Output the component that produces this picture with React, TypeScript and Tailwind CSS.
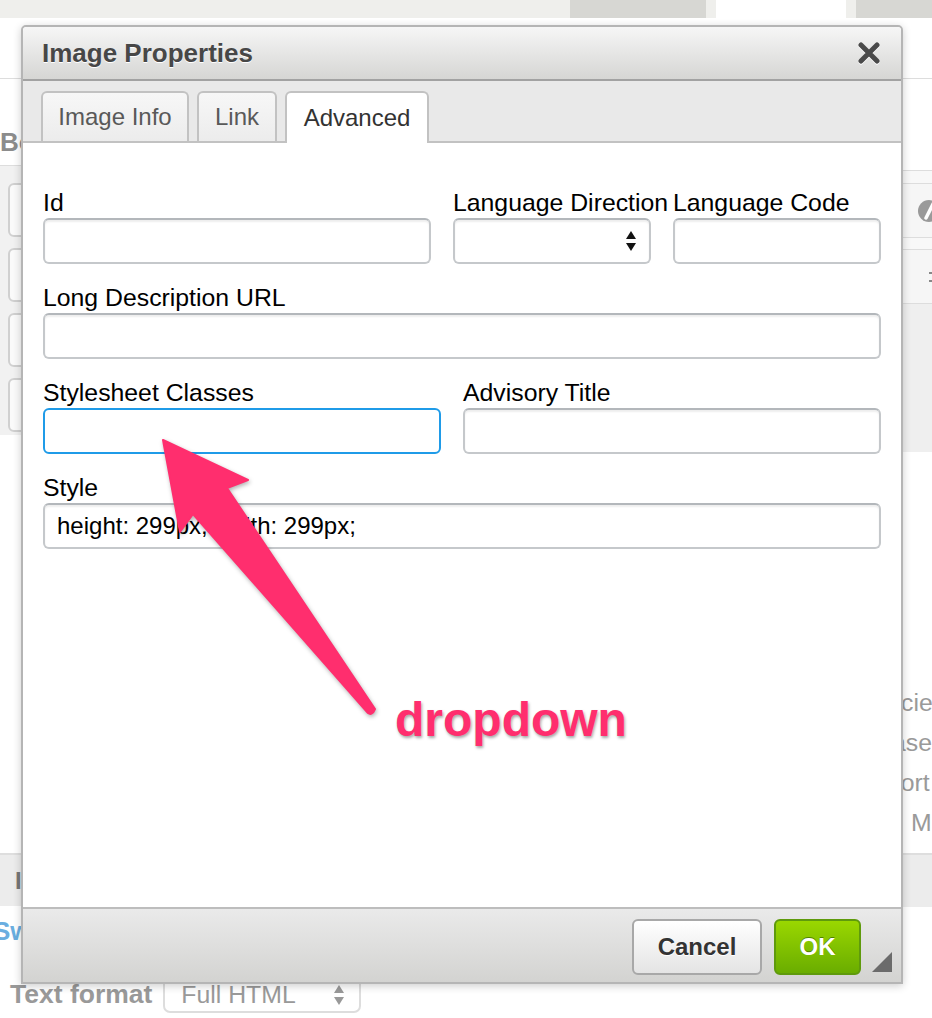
import type { ReactNode } from 'react';

const inputClass =
  'h-[46px] w-full rounded-[6px] border-2 border-[#c5c8cb] border-t-[#b3b7bb] bg-white shadow-[inset_0_2px_2px_rgba(0,0,0,0.07)]';

function Field({ label, children }: { label: string; children: ReactNode }) {
  return (
    <div className="flex flex-col">
      <label className="mb-[1px] whitespace-nowrap text-[24.8px] leading-[28px] text-black">
        {label}
      </label>
      {children}
    </div>
  );
}

function Tab({ label, active, width }: { label: string; active?: boolean; width: string }) {
  return (
    <div
      className={
        active
          ? `relative -mb-[2px] flex h-[52px] items-center justify-center rounded-t-[6px] border-2 border-b-0 border-[#c2c2c2] bg-white text-[24px] text-[#333] ${width}`
          : `flex h-[50px] items-center justify-center rounded-t-[6px] border-2 border-b-0 border-[#c2c2c2] bg-gradient-to-b from-[#f7f7f7] to-[#ececec] text-[24px] text-[#595959] ${width}`
      }
    >
      {label}
    </div>
  );
}

function SelectArrows() {
  return (
    <svg width="12" height="22" viewBox="0 0 12 22" aria-hidden="true">
      <path d="M6 1 L11 9 L1 9 Z" fill="#111" />
      <path d="M1 13 L11 13 L6 21 Z" fill="#111" />
    </svg>
  );
}

function Background() {
  return (
    <div className="flex h-full flex-col">
      <div className="flex h-[18px] bg-[#efefec]">
        <div className="w-[570px]" />
        <div className="w-[136px] bg-[#d7d7d3]" />
        <div className="w-[10px]" />
        <div className="w-[130px] bg-white" />
        <div className="w-[10px]" />
        <div className="flex-1 bg-[#d7d7d3]" />
      </div>

      <div className="flex h-[957px]">
        {/* left edge of the page behind the dialog */}
        <div className="flex w-[22px] flex-col overflow-hidden">
          <div className="h-[61px] shrink-0 border-b border-[#dddddd]" />
          <div className="h-[86px] shrink-0 whitespace-nowrap pt-[49px] text-[26px] font-bold leading-[28px] text-[#8c8c8c]">
            Bo
          </div>
          <div className="flex h-[270px] shrink-0 flex-col gap-[11px] border-t border-[#dddddd] bg-[#f1f1f1] pl-[8px] pt-[17px]">
            <div className="h-[54px] w-[40px] rounded-[6px] border-2 border-[#d0d0d0] bg-[#fafafa]" />
            <div className="h-[54px] w-[40px] rounded-[6px] border-2 border-[#d0d0d0] bg-[#fafafa]" />
            <div className="h-[54px] w-[40px] rounded-[6px] border-2 border-[#d0d0d0] bg-[#fafafa]" />
            <div className="h-[54px] w-[40px] rounded-[6px] border-2 border-[#d0d0d0] bg-[#fafafa]" />
          </div>
          <div className="h-[418px] shrink-0" />
          <div className="flex h-[53px] shrink-0 items-center border-t-2 border-[#dedede] bg-[#ececec] pl-[15px] text-[24px] font-bold text-[#777]">
            I
          </div>
          <div className="-ml-[7px] whitespace-nowrap pt-[11px] text-[26px] font-bold leading-[28px] text-[#6aaee0]">
            Sw
          </div>
        </div>

        <div className="flex-1" />

        {/* right edge of the page behind the dialog */}
        <div className="flex w-[52px] flex-col overflow-hidden">
          <div className="h-[61px] shrink-0 border-b border-[#dddddd]" />
          <div className="h-[91px] shrink-0" />
          <div className="h-[13px] shrink-0 border-t border-[#dddddd] bg-[#f8f8f8]" />
          <div className="flex h-[54px] shrink-0 items-center border-t border-[#dddddd] bg-[#f6f6f6] pl-[37px]">
            <svg width="24" height="24" viewBox="0 0 24 24" aria-hidden="true" className="shrink-0">
              <circle cx="12" cy="12" r="11" fill="#9a9a9a" />
              <path d="M16 5 L9 19" stroke="#fff" strokeWidth="3.5" strokeLinecap="round" />
            </svg>
          </div>
          <div className="h-[12px] shrink-0 border-t border-[#dddddd] bg-[#f8f8f8]" />
          <div className="flex h-[54px] shrink-0 flex-col justify-center gap-[6px] border-t border-[#dddddd] bg-[#f6f6f6] pl-[49px]">
            <div className="h-[2px] w-[4px] bg-[#888]" />
            <div className="h-[2px] w-[4px] bg-[#888]" />
          </div>
          <div className="h-[149px] shrink-0 border-t border-[#dddddd] bg-[#efefef]" />
          <div className="h-[231px] shrink-0" />
          <div className="whitespace-nowrap text-[24.8px] leading-[40px] text-[#9a9a9a]">
            <div className="pl-[21px]">cie</div>
            <div className="pl-[12px]">ase</div>
            <div className="pl-[7px]">port</div>
            <div className="pl-[31px]">M</div>
          </div>
          <div className="h-[10px] shrink-0" />
          <div className="h-[54px] shrink-0 border-t-2 border-[#dedede] bg-[#ececec]" />
        </div>
      </div>

      <div className="flex items-center gap-[11px] pl-[10px]">
        <span className="whitespace-nowrap text-[26.5px] font-bold text-[#999]">Text format</span>
        <div className="flex h-[36px] w-[198px] items-center justify-between rounded-[7px] border-2 border-[#dddddd] pl-[16px] pr-[14px] text-[24.8px] text-[#999]">
          <span>Full HTML</span>
          <svg width="12" height="22" viewBox="0 0 12 22" aria-hidden="true">
            <path d="M6 1 L11 9 L1 9 Z" fill="#999" />
            <path d="M1 13 L11 13 L6 21 Z" fill="#999" />
          </svg>
        </div>
      </div>
    </div>
  );
}

function Dialog() {
  return (
    <div className="absolute left-[21px] top-[25px] flex h-[959px] w-[882px] flex-col rounded-t-[5px] border-2 border-[#b5b5b5] bg-white shadow-[0_2px_8px_rgba(0,0,0,0.2)]">
      <div className="flex h-[54px] shrink-0 items-center justify-between rounded-t-[4px] border-b-2 border-[#a2a2a2] bg-gradient-to-b from-[#f6f6f6] to-[#d6d6d4] pl-[19px] pr-[21px]">
        <h1 className="text-[26px] font-bold text-[#474747] [text-shadow:0_1px_0_#fff]">
          Image Properties
        </h1>
        <svg width="22" height="22" viewBox="0 0 22 22" aria-hidden="true" className="drop-shadow-[0_1px_0_#fff]">
          <path d="M3 3 L19 19 M19 3 L3 19" stroke="#4a4a4a" strokeWidth="5" strokeLinecap="round" />
        </svg>
      </div>

      <div className="flex h-[62px] shrink-0 items-end gap-[8px] border-b-2 border-[#c2c2c2] bg-[#e9e9e9] pl-[18px]">
        <Tab label="Image Info" width="w-[148px]" />
        <Tab label="Link" width="w-[80px]" />
        <Tab label="Advanced" width="w-[144px]" active />
      </div>

      <div className="flex flex-1 flex-col gap-[20px] px-[20px] pt-[46px]">
        <div className="grid grid-cols-[388px_198px_208px] gap-x-[22px]">
          <Field label="Id">
            <div className={inputClass} />
          </Field>
          <Field label="Language Direction">
            <div className={`${inputClass} flex items-center justify-end pr-[12px]`}>
              <SelectArrows />
            </div>
          </Field>
          <Field label="Language Code">
            <div className={inputClass} />
          </Field>
        </div>

        <Field label="Long Description URL">
          <div className={inputClass} />
        </Field>

        <div className="grid grid-cols-[398px_418px] gap-x-[22px]">
          <Field label="Stylesheet Classes">
            <div className="h-[46px] w-full rounded-[6px] border-2 border-[#1f9be8] bg-white" />
          </Field>
          <Field label="Advisory Title">
            <div className={inputClass} />
          </Field>
        </div>

        <Field label="Style">
          <div className={`${inputClass} flex items-center pl-[12px] text-[24px] text-black`}>
            height: 299px; width: 299px;
          </div>
        </Field>
      </div>

      <div className="flex h-[75px] shrink-0 items-start justify-end gap-[12px] border-t-2 border-[#bdbdbd] bg-gradient-to-b from-[#eaeaea] to-[#d3d3d1] pr-[9px] pt-[10px]">
        <button
          type="button"
          className="flex h-[56px] w-[130px] items-center justify-center rounded-[6px] border-2 border-[#a8a8a8] bg-gradient-to-b from-[#ffffff] to-[#e4e4e4] text-[24px] font-bold text-[#333] [text-shadow:0_1px_0_#fff]"
        >
          Cancel
        </button>
        <button
          type="button"
          className="flex h-[56px] w-[87px] items-center justify-center rounded-[6px] border-2 border-[#5f9a0c] bg-gradient-to-b from-[#9ad700] to-[#6aad00] text-[24px] font-bold text-white [text-shadow:0_-1px_0_#4f8200]"
        >
          OK
        </button>
        <svg width="20" height="20" viewBox="0 0 20 20" aria-hidden="true" className="mt-[33px] ml-[-1px]">
          <path d="M20 0 L20 20 L0 20 Z" fill="#6b6b6b" />
        </svg>
      </div>
    </div>
  );
}

function Annotation() {
  return (
    <>
      <svg
        className="pointer-events-none absolute left-0 top-0 drop-shadow-[1px_2px_2px_rgba(0,0,0,0.3)]"
        width="932"
        height="1018"
        viewBox="0 0 932 1018"
        aria-hidden="true"
      >
        <path
          d="M163 440 L248 480 L227 488 L375 709 Q372 716 368 713 L193 514 L180 532 Z"
          fill="#ff2e6e"
          stroke="#ff2e6e"
          strokeWidth="2"
          strokeLinejoin="round"
        />
      </svg>
      <div className="pointer-events-none absolute left-[395px] top-[696px] text-[48px] font-bold leading-[48px] text-[#ff2e6e] [-webkit-text-stroke:5px_#fff] [paint-order:stroke_fill] [text-shadow:1px_2px_3px_rgba(0,0,0,0.35)]">
        dropdown
      </div>
    </>
  );
}

export default function App() {
  return (
    <div className="relative h-[1018px] w-[932px] overflow-hidden bg-white font-['Liberation_Sans',Arial,sans-serif]">
      <Background />
      <Dialog />
      <Annotation />
    </div>
  );
}
